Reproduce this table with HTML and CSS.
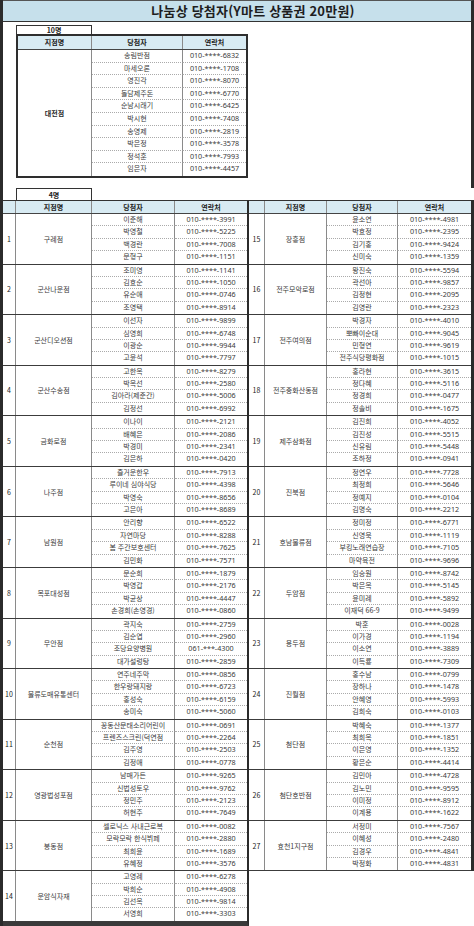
FILE: index.html
```html
<!DOCTYPE html>
<html lang="ko">
<head>
<meta charset="utf-8">
<title>나눔상 당첨자</title>
<link rel="stylesheet" href="styles.css">
</head>
<body>
<div class="sheet">
  <div class="title">나눔상 당첨자(Y마트 상품권 20만원)</div>

  <section class="top">
    <div class="count count-top">10명</div>
    <div class="ttable">
      <div class="trow thead"><div class="tc">지점명</div><div class="tc">당첨자</div><div class="tc">연락처</div></div>
      <div class="tbody">
        <div class="tstore">대전점</div>
        <div class="tn">송림반점</div><div class="tp">010-****-6832</div>
        <div class="tn">마세오론</div><div class="tp">010-****-1708</div>
        <div class="tn">영진각</div><div class="tp">010-****-8070</div>
        <div class="tn">돌담제주돈</div><div class="tp">010-****-6770</div>
        <div class="tn">순남시래기</div><div class="tp">010-****-6425</div>
        <div class="tn">박시현</div><div class="tp">010-****-7408</div>
        <div class="tn">송영제</div><div class="tp">010-****-2819</div>
        <div class="tn">박은정</div><div class="tp">010-****-3578</div>
        <div class="tn">정석훈</div><div class="tp">010-****-7993</div>
        <div class="tn last">임은자</div><div class="tp last">010-****-4457</div>
      </div>
    </div>
  </section>

  <section class="main">
    <div class="count count-main">4명</div>
    <div class="halves">
      <div class="half left">
        <div class="grp head"><div class="h"></div><div class="h">지점명</div><div class="h">당첨자</div><div class="h">연락처</div></div>
        <div class="grp"><div class="no">1</div><div class="store">구례점</div>
          <div class="n">이준해</div><div class="p">010-****-3991</div>
          <div class="n">박영철</div><div class="p">010-****-5225</div>
          <div class="n">백경란</div><div class="p">010-****-7008</div>
          <div class="n">문형구</div><div class="p">010-****-1151</div></div>
        <div class="grp"><div class="no">2</div><div class="store">군산나운점</div>
          <div class="n">조미영</div><div class="p">010-****-1141</div>
          <div class="n">김효순</div><div class="p">010-****-1050</div>
          <div class="n">유순애</div><div class="p">010-****-0746</div>
          <div class="n">조영택</div><div class="p">010-****-8914</div></div>
        <div class="grp"><div class="no">3</div><div class="store">군산디오션점</div>
          <div class="n">이선자</div><div class="p">010-****-9899</div>
          <div class="n">심영희</div><div class="p">010-****-6748</div>
          <div class="n">이광순</div><div class="p">010-****-9944</div>
          <div class="n">고윤석</div><div class="p">010-****-7797</div></div>
        <div class="grp"><div class="no">4</div><div class="store">군산수송점</div>
          <div class="n">고한옥</div><div class="p">010-****-8279</div>
          <div class="n">박옥선</div><div class="p">010-****-2580</div>
          <div class="n">김아라(제준간)</div><div class="p">010-****-5006</div>
          <div class="n">김정선</div><div class="p">010-****-6992</div></div>
        <div class="grp"><div class="no">5</div><div class="store">금화로점</div>
          <div class="n">이나이</div><div class="p">010-****-2121</div>
          <div class="n">배혜은</div><div class="p">010-****-2086</div>
          <div class="n">박경미</div><div class="p">010-****-2341</div>
          <div class="n">김은하</div><div class="p">010-****-0420</div></div>
        <div class="grp"><div class="no">6</div><div class="store">나주점</div>
          <div class="n">즐거운한우</div><div class="p">010-****-7913</div>
          <div class="n">루이네 심야식당</div><div class="p">010-****-4398</div>
          <div class="n">박영숙</div><div class="p">010-****-8656</div>
          <div class="n">고은아</div><div class="p">010-****-8689</div></div>
        <div class="grp"><div class="no">7</div><div class="store">남원점</div>
          <div class="n">안리향</div><div class="p">010-****-6522</div>
          <div class="n">자연마당</div><div class="p">010-****-8288</div>
          <div class="n">봄 주간보호센터</div><div class="p">010-****-7625</div>
          <div class="n">김민화</div><div class="p">010-****-7571</div></div>
        <div class="grp"><div class="no">8</div><div class="store">목포대성점</div>
          <div class="n">문순희</div><div class="p">010-****-1879</div>
          <div class="n">박영갑</div><div class="p">010-****-2176</div>
          <div class="n">박균상</div><div class="p">010-****-4447</div>
          <div class="n">손경희(손영경)</div><div class="p">010-****-0860</div></div>
        <div class="grp"><div class="no">9</div><div class="store">무안점</div>
          <div class="n">곽지숙</div><div class="p">010-****-2759</div>
          <div class="n">김순엽</div><div class="p">010-****-2960</div>
          <div class="n">조당요양병원</div><div class="p">061-***-4300</div>
          <div class="n">대가설렁탕</div><div class="p">010-****-2859</div></div>
        <div class="grp"><div class="no">10</div><div class="store">물류도매유통센터</div>
          <div class="n">연주네주막</div><div class="p">010-****-0856</div>
          <div class="n">한우랑돼지랑</div><div class="p">010-****-6723</div>
          <div class="n">홍성숙</div><div class="p">010-****-6159</div>
          <div class="n">송미숙</div><div class="p">010-****-5060</div></div>
        <div class="grp"><div class="no">11</div><div class="store">순천점</div>
          <div class="n">꽁동산문태소리어린이</div><div class="p">010-****-0691</div>
          <div class="n">프렌즈스크린(덕연점</div><div class="p">010-****-2264</div>
          <div class="n">김주영</div><div class="p">010-****-2503</div>
          <div class="n">김정애</div><div class="p">010-****-0778</div></div>
        <div class="grp"><div class="no">12</div><div class="store">영광법성포점</div>
          <div class="n">남매가든</div><div class="p">010-****-9265</div>
          <div class="n">신법성토우</div><div class="p">010-****-9762</div>
          <div class="n">정민주</div><div class="p">010-****-2123</div>
          <div class="n">허현주</div><div class="p">010-****-7649</div></div>
        <div class="grp"><div class="no">13</div><div class="store">봉동점</div>
          <div class="n">셀로닉스 사내근로복</div><div class="p">010-****-0082</div>
          <div class="n">모락모락 한식뷔페</div><div class="p">010-****-2880</div>
          <div class="n">최희윤</div><div class="p">010-****-1689</div>
          <div class="n">유혜정</div><div class="p">010-****-3576</div></div>
        <div class="grp"><div class="no">14</div><div class="store">운암식자재</div>
          <div class="n">고영례</div><div class="p">010-****-6278</div>
          <div class="n">박희순</div><div class="p">010-****-4908</div>
          <div class="n">김선옥</div><div class="p">010-****-9814</div>
          <div class="n">서영희</div><div class="p">010-****-3303</div></div>
      </div>

      <div class="half right">
        <div class="grp head"><div class="h"></div><div class="h">지점명</div><div class="h">당첨자</div><div class="h">연락처</div></div>
        <div class="grp"><div class="no">15</div><div class="store">장흥점</div>
          <div class="n">윤소연</div><div class="p">010-****-4981</div>
          <div class="n">박효정</div><div class="p">010-****-2395</div>
          <div class="n">김기홍</div><div class="p">010-****-9424</div>
          <div class="n">신미숙</div><div class="p">010-****-1359</div></div>
        <div class="grp"><div class="no">16</div><div class="store">전주모악로점</div>
          <div class="n">왕진숙</div><div class="p">010-****-5594</div>
          <div class="n">곽선아</div><div class="p">010-****-9857</div>
          <div class="n">김정현</div><div class="p">010-****-2095</div>
          <div class="n">김영란</div><div class="p">010-****-2323</div></div>
        <div class="grp"><div class="no">17</div><div class="store">전주여의점</div>
          <div class="n">박경자</div><div class="p">010-****-4010</div>
          <div class="n">뽀빠이순대</div><div class="p">010-****-9045</div>
          <div class="n">민형연</div><div class="p">010-****-9619</div>
          <div class="n">전주식당평화점</div><div class="p">010-****-1015</div></div>
        <div class="grp"><div class="no">18</div><div class="store">전주중화산동점</div>
          <div class="n">홍라현</div><div class="p">010-****-3615</div>
          <div class="n">정다혜</div><div class="p">010-****-5116</div>
          <div class="n">정경희</div><div class="p">010-****-0477</div>
          <div class="n">정솔비</div><div class="p">010-****-1675</div></div>
        <div class="grp"><div class="no">19</div><div class="store">제주삼화점</div>
          <div class="n">김진희</div><div class="p">010-****-4052</div>
          <div class="n">김진성</div><div class="p">010-****-5515</div>
          <div class="n">신유림</div><div class="p">010-****-5448</div>
          <div class="n">조하정</div><div class="p">010-****-0941</div></div>
        <div class="grp"><div class="no">20</div><div class="store">진북점</div>
          <div class="n">정연우</div><div class="p">010-****-7728</div>
          <div class="n">최정희</div><div class="p">010-****-5646</div>
          <div class="n">정예지</div><div class="p">010-****-0104</div>
          <div class="n">김명숙</div><div class="p">010-****-2212</div></div>
        <div class="grp"><div class="no">21</div><div class="store">호남물류점</div>
          <div class="n">정미정</div><div class="p">010-****-6771</div>
          <div class="n">신영욱</div><div class="p">010-****-1119</div>
          <div class="n">부킹노래연습장</div><div class="p">010-****-7105</div>
          <div class="n">마약육전</div><div class="p">010-****-9696</div></div>
        <div class="grp"><div class="no">22</div><div class="store">두암점</div>
          <div class="n">임승원</div><div class="p">010-****-8742</div>
          <div class="n">박은옥</div><div class="p">010-****-5145</div>
          <div class="n">윤미례</div><div class="p">010-****-5892</div>
          <div class="n">이재덕 66-9</div><div class="p">010-****-9499</div></div>
        <div class="grp"><div class="no">23</div><div class="store">용두점</div>
          <div class="n">박훈</div><div class="p">010-****-0028</div>
          <div class="n">이가경</div><div class="p">010-****-1194</div>
          <div class="n">이소연</div><div class="p">010-****-3889</div>
          <div class="n">이득룡</div><div class="p">010-****-7309</div></div>
        <div class="grp"><div class="no">24</div><div class="store">진월점</div>
          <div class="n">홍수남</div><div class="p">010-****-0799</div>
          <div class="n">장하나</div><div class="p">010-****-1478</div>
          <div class="n">안혜영</div><div class="p">010-****-5993</div>
          <div class="n">김희숙</div><div class="p">010-****-0103</div></div>
        <div class="grp"><div class="no">25</div><div class="store">첨단점</div>
          <div class="n">박혜숙</div><div class="p">010-****-1377</div>
          <div class="n">최희옥</div><div class="p">010-****-1851</div>
          <div class="n">이은영</div><div class="p">010-****-1352</div>
          <div class="n">황은순</div><div class="p">010-****-4414</div></div>
        <div class="grp"><div class="no">26</div><div class="store">첨단호반점</div>
          <div class="n">김민아</div><div class="p">010-****-4728</div>
          <div class="n">김노민</div><div class="p">010-****-9595</div>
          <div class="n">이미정</div><div class="p">010-****-8912</div>
          <div class="n">이계용</div><div class="p">010-****-1622</div></div>
        <div class="grp"><div class="no">27</div><div class="store">효천1지구점</div>
          <div class="n">서정미</div><div class="p">010-****-7567</div>
          <div class="n">이혜성</div><div class="p">010-****-2480</div>
          <div class="n">김경우</div><div class="p">010-****-4841</div>
          <div class="n">박정화</div><div class="p">010-****-4831</div></div>
      </div>
    </div>
  </section>
</div>
</body>
</html>
```

FILE: styles.css
```css
* { box-sizing: border-box; }
html, body { margin: 0; padding: 0; background: #fff; }
body {
  width: 474px;
  height: 926px;
  overflow: hidden;
  font-family: "Noto Sans CJK KR", "Noto Sans", sans-serif;
  color: #3a3a3a;
}
.sheet {
  width: 474px;
  height: 926px;
  border-left: 3px solid #2b2b2b;
}
.title {
  height: 22px;
  background: #c6e0eb;
  border-top: 1px solid #555;
  border-bottom: 1px solid #333;
  border-right: 3px solid #2b2b2b;
  font-size: 13px;
  font-weight: 700;
  color: #1e1e1e;
  line-height: 20px;
  text-align: center;
  padding-left: 32px;
  letter-spacing: 0.2px;
}
.top {
  height: 166px;
  padding: 3px 0 0 13px;
  border-right: 3px solid #2b2b2b;
}
.count {
  width: 76px;
  border: 1px solid #333;
  border-bottom: none;
  font-size: 7px;
  font-weight: 700;
  color: #222;
  text-align: center;
}
.count-top { height: 9px; line-height: 9px; }
.count-main { height: 12px; line-height: 12px; margin-left: 13px; }
.ttable {
  width: 232px;
  border: 2px solid #2e2e2e;
}
.trow, .tbody {
  display: grid;
  grid-template-columns: 74px 91px 63px;
}
.thead {
  height: 14px;
  background: #d8ebf3;
  border-bottom: 1px solid #444;
}
.tc {
  font-size: 7px;
  font-weight: 700;
  color: #222;
  text-align: center;
  line-height: 13px;
  border-right: 1px solid #8a8a8a;
}
.tc:last-child { border-right: none; }
.tbody { grid-template-rows: repeat(10, 12.6px); }
.tstore {
  grid-row: 1 / span 10;
  display: flex;
  align-items: center;
  justify-content: center;
  font-size: 7px;
  font-weight: 700;
  color: #2a2a2a;
  border-right: 1px solid #8a8a8a;
}
.tn, .tp {
  font-size: 7px;
  text-align: center;
  line-height: 11.6px;
  border-bottom: 1px dotted #aaa;
  white-space: nowrap;
}
.tp, .p {
  font-family: "Noto Sans", "Noto Sans CJK KR", sans-serif;
  font-size: 7.2px;
}
.tn { border-right: 1px solid #8a8a8a; }
.tn.last, .tp.last { border-bottom: none; }

.halves { display: flex; align-items: flex-start; }
.half.left {
  width: 246px;
  border-right: 2px solid #2b2b2b;
  border-bottom: 4px solid #3a3a3a;
}
.half.right {
  width: 225px;
  border-right: 3px solid #2b2b2b;
}
.half.left .grp { grid-template-columns: 13px 76px 83px 72px; }
.half.right .grp { grid-template-columns: 16px 62px 71px 73px; }
.grp {
  display: grid;
  grid-template-rows: repeat(4, 12.4px);
  border-bottom: 1px solid #3c3c3c;
}
.grp.head {
  grid-template-rows: 12px;
  background: #d8ebf3;
  border-top: 1px solid #333;
  border-bottom: 1px solid #444;
}
.h {
  font-size: 7px;
  font-weight: 700;
  color: #222;
  text-align: center;
  line-height: 12px;
  border-right: 1px solid #8a8a8a;
}
.h:last-child { border-right: none; }
.no, .store {
  grid-row: 1 / span 4;
  display: flex;
  align-items: center;
  justify-content: center;
  font-size: 7px;
  border-right: 1px solid #8a8a8a;
  white-space: nowrap;
}
.no { color: #222; }
.n, .p {
  text-align: center;
  line-height: 11.4px;
  white-space: nowrap;
  border-bottom: 1px dotted #aaa;
}
.n { font-size: 7px; border-right: 1px solid #8a8a8a; }
.grp > .n:nth-last-child(2), .grp > .p:last-child { border-bottom: none; }
```
